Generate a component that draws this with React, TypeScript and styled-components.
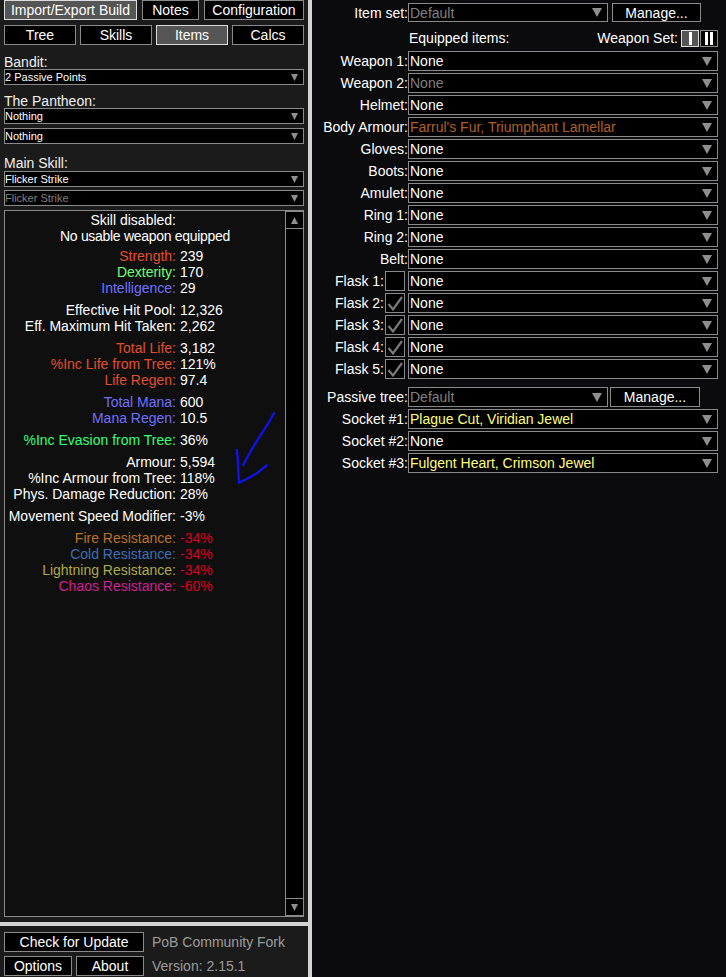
import React from 'react';
import styled, { createGlobalStyle } from 'styled-components';

const Global = createGlobalStyle`
  html, body { margin: 0; padding: 0; background: #0b0b0d; }
  body { font-family: "Liberation Sans", Arial, sans-serif; color: #fff; }
  * { box-sizing: border-box; }
`;

const C = {
  normal: '#ffffff',
  disabled: '#808080',
  border: '#8a8a8a',
  str: '#e05030',
  dex: '#70ff70',
  int: '#7070ff',
  life: '#e05030',
  mana: '#7070ff',
  evasion: '#33ff77',
  fire: '#b97123',
  cold: '#3f6db3',
  lightning: '#adaa47',
  chaos: '#d02090',
  negative: '#dd0022',
  unique: '#af6025',
  rare: '#ffff77',
};

const Page = styled.div`
  display: flex;
  width: 726px;
  height: 977px;
  overflow: hidden;
  background: #0b0b0d;
  font-size: 14px;
`;

const LeftPanel = styled.div`
  width: 308px;
  flex: none;
  display: flex;
  flex-direction: column;
  background: #1b1b1b;
`;

const VDivider = styled.div`
  width: 4px;
  flex: none;
  background: #d4d4d4;
`;

const HDivider = styled.div`
  height: 4px;
  flex: none;
  background: #d4d4d4;
`;

const LeftTop = styled.div`
  flex: 1;
  min-height: 0;
  display: flex;
  flex-direction: column;
  padding: 0 4px 5px 4px;
`;

const ButtonRow = styled.div<{ $gap: number; $top: number }>`
  display: flex;
  gap: ${p => p.$gap}px;
  margin-top: ${p => p.$top}px;
`;

const Button = styled.div<{ $w: number; $h?: number; $active?: boolean; $left?: number }>`
  width: ${p => p.$w}px;
  height: ${p => p.$h ?? 20}px;
  margin-left: ${p => p.$left ?? 0}px;
  flex: none;
  display: flex;
  align-items: center;
  justify-content: center;
  background: ${p => (p.$active ? '#555555' : '#000')};
  border: 1px solid ${p => (p.$active ? '#dcdcdc' : C.border)};
  color: #fff;
  font-size: 14px;
  white-space: nowrap;
`;

const FieldLabel = styled.div<{ $top: number }>`
  margin-top: ${p => p.$top}px;
  line-height: 14px;
  height: 14px;
  font-size: 14px;
  color: #f0f0f0;
`;

const SelectBox = styled.div<{ $w?: number; $h: number; $size: number; $tone?: string; $top?: number }>`
  width: ${p => (p.$w ? `${p.$w}px` : '100%')};
  height: ${p => p.$h}px;
  margin-top: ${p => p.$top ?? 0}px;
  flex: none;
  display: flex;
  align-items: center;
  background: #000;
  border: 1px solid ${C.border};
  padding: 0 5px 0 ${p => (p.$size > 12 ? 1 : 0)}px;
  font-size: ${p => p.$size}px;
  color: ${p => p.$tone ?? C.normal};
  white-space: nowrap;
  overflow: hidden;
`;

const SelectText = styled.span`
  flex: 1;
  overflow: hidden;
`;

const ArrowSvg = styled.svg`
  flex: none;
  display: block;
`;

function Arrow({ big, up }: { big?: boolean; up?: boolean }) {
  const w = big ? 10 : 7;
  const h = big ? 9 : 7;
  return (
    <ArrowSvg width={w} height={h} viewBox={`0 0 ${w} ${h}`}>
      <polygon
        points={up ? `0,${h} ${w},${h} ${w / 2},0` : `0,0 ${w},0 ${w / 2},${h}`}
        fill="#8e8e8e"
      />
    </ArrowSvg>
  );
}

function Select({
  text,
  tone,
  w,
  big,
  top,
}: {
  text: string;
  tone?: string;
  w?: number;
  big?: boolean;
  top?: number;
}) {
  return (
    <SelectBox $w={w} $h={big ? 20 : 16} $size={big ? 14 : 11} $tone={tone} $top={top}>
      <SelectText>{text}</SelectText>
      <Arrow big={big} />
    </SelectBox>
  );
}

/* ---------- stats box ---------- */

const StatsBox = styled.div`
  position: relative;
  flex: 1;
  min-height: 0;
  margin-top: 4px;
  display: flex;
  background: #0f0f0f;
  border: 1px solid ${C.border};
`;

const StatsContent = styled.div`
  flex: 1;
  padding-top: 1px;
  font-size: 14px;
`;

const Scrollbar = styled.div`
  width: 18px;
  flex: none;
  display: flex;
  flex-direction: column;
  justify-content: space-between;
  background: #000;
  border-left: 1px solid ${C.border};
`;

const ScrollArrowBox = styled.div`
  height: 18px;
  display: flex;
  align-items: center;
  justify-content: center;
  border: 1px solid ${C.border};
  border-left: none;
  margin-right: -1px;
`;

const StatGroup = styled.div<{ $top: number }>`
  margin-top: ${p => p.$top}px;
`;

const StatLine = styled.div`
  display: grid;
  grid-template-columns: 171px 1fr;
  column-gap: 4px;
  height: 16px;
  line-height: 16px;
  white-space: nowrap;
`;

const StatLabel = styled.span<{ $c?: string }>`
  text-align: right;
  color: ${p => p.$c ?? C.normal};
`;

const StatValue = styled.span<{ $c?: string }>`
  color: ${p => p.$c ?? C.normal};
`;

const CenterLine = styled.div`
  height: 16px;
  line-height: 16px;
  text-align: center;
  white-space: nowrap;
  letter-spacing: -0.3px;
`;

const Scribble = styled.svg`
  position: absolute;
  left: 225px;
  top: 197px;
  pointer-events: none;
`;

type Stat = [string, string, string?, string?];

const groups: { top: number; rows: Stat[] }[] = [
  {
    top: 4,
    rows: [
      ['Strength:', '239', C.str],
      ['Dexterity:', '170', C.dex],
      ['Intelligence:', '29', C.int],
    ],
  },
  {
    top: 6,
    rows: [
      ['Effective Hit Pool:', '12,326'],
      ['Eff. Maximum Hit Taken:', '2,262'],
    ],
  },
  {
    top: 6,
    rows: [
      ['Total Life:', '3,182', C.life],
      ['%Inc Life from Tree:', '121%', C.life],
      ['Life Regen:', '97.4', C.life],
    ],
  },
  {
    top: 6,
    rows: [
      ['Total Mana:', '600', C.mana],
      ['Mana Regen:', '10.5', C.mana],
    ],
  },
  { top: 6, rows: [['%Inc Evasion from Tree:', '36%', C.evasion]] },
  {
    top: 6,
    rows: [
      ['Armour:', '5,594'],
      ['%Inc Armour from Tree:', '118%'],
      ['Phys. Damage Reduction:', '28%'],
    ],
  },
  { top: 6, rows: [['Movement Speed Modifier:', '-3%']] },
  {
    top: 6,
    rows: [
      ['Fire Resistance:', '-34%', C.fire, C.negative],
      ['Cold Resistance:', '-34%', C.cold, C.negative],
      ['Lightning Resistance:', '-34%', C.lightning, C.negative],
      ['Chaos Resistance:', '-60%', C.chaos, C.negative],
    ],
  },
];

/* ---------- left bottom ---------- */

const LeftBottom = styled.div`
  height: 51px;
  flex: none;
  padding: 6px 4px 0 4px;
  display: grid;
  grid-template-columns: 140px 1fr;
  grid-template-rows: 20px 20px;
  row-gap: 4px;
  column-gap: 8px;
`;

const ButtonPair = styled.div`
  display: flex;
  gap: 4px;
`;

const InfoText = styled.div`
  line-height: 20px;
  font-size: 14px;
  color: #9c9c9c;
  white-space: nowrap;
`;

/* ---------- right panel ---------- */

const RightPanel = styled.div`
  flex: 1;
  display: flex;
  flex-direction: column;
  padding: 3px 8px 0 0;
  background: #0b0b0d;
`;

const FieldRow = styled.div<{ $top: number; $h?: number }>`
  display: flex;
  align-items: center;
  height: ${p => p.$h ?? 20}px;
  margin-top: ${p => p.$top}px;
`;

const RowLabel = styled.div`
  width: 96px;
  flex: none;
  display: flex;
  align-items: center;
  justify-content: flex-end;
  white-space: nowrap;
  color: #fff;
`;

const LabelText = styled.span<{ $pad?: number }>`
  margin-right: ${p => p.$pad ?? 0}px;
`;

const CheckBox = styled.div`
  width: 20px;
  height: 20px;
  margin-right: 3px;
  flex: none;
  background: #000;
  border: 1px solid ${C.border};
  display: flex;
  align-items: center;
  justify-content: center;
`;

const EquipRow = styled.div`
  display: flex;
  align-items: flex-start;
  height: 17px;
  margin-top: 8px;
  padding-left: 97px;
`;

const EquipText = styled.span`
  line-height: 14px;
  margin-top: 1px;
  white-space: nowrap;
`;

const Spacer = styled.div`
  flex: 1;
`;

const WeaponSetLabel = styled.span`
  line-height: 14px;
  margin-top: 1px;
  margin-right: 3px;
  white-space: nowrap;
`;

const SetButton = styled.div<{ $active?: boolean }>`
  width: 18px;
  height: 17px;
  margin-left: ${p => (p.$active ? 0 : 1)}px;
  display: flex;
  align-items: center;
  justify-content: center;
  gap: 2px;
  background: ${p => (p.$active ? '#555555' : '#000')};
  border: 1px solid ${p => (p.$active ? '#dcdcdc' : C.border)};
`;

const SetBar = styled.span`
  width: 3px;
  height: 13px;
  background: #fff;
`;

function Check() {
  return (
    <svg width="18" height="18" viewBox="0 0 18 18">
      <polyline points="2.5,10 7,15.5 16,3" fill="none" stroke="#7a7a7a" strokeWidth="2.2" />
    </svg>
  );
}

const slots: [string, string, string?][] = [
  ['Weapon 1:', 'None'],
  ['Weapon 2:', 'None', C.disabled],
  ['Helmet:', 'None'],
  ['Body Armour:', "Farrul's Fur, Triumphant Lamellar", C.unique],
  ['Gloves:', 'None'],
  ['Boots:', 'None'],
  ['Amulet:', 'None'],
  ['Ring 1:', 'None'],
  ['Ring 2:', 'None'],
  ['Belt:', 'None'],
];

const flasks: [string, boolean][] = [
  ['Flask 1:', false],
  ['Flask 2:', true],
  ['Flask 3:', true],
  ['Flask 4:', true],
  ['Flask 5:', true],
];

const sockets: [string, string, string?][] = [
  ['Socket #1:', 'Plague Cut, Viridian Jewel', C.rare],
  ['Socket #2:', 'None'],
  ['Socket #3:', 'Fulgent Heart, Crimson Jewel', C.rare],
];

export default function App() {
  return (
    <>
      <Global />
      <Page>
        <LeftPanel>
          <LeftTop>
            <ButtonRow $gap={5} $top={0}>
              <Button $w={133} $active>Import/Export Build</Button>
              <Button $w={57}>Notes</Button>
              <Button $w={100}>Configuration</Button>
            </ButtonRow>
            <ButtonRow $gap={4} $top={5}>
              <Button $w={72}>Tree</Button>
              <Button $w={72}>Skills</Button>
              <Button $w={72} $active>Items</Button>
              <Button $w={72}>Calcs</Button>
            </ButtonRow>

            <FieldLabel $top={10}>Bandit:</FieldLabel>
            <Select text="2 Passive Points" />

            <FieldLabel $top={9}>The Pantheon:</FieldLabel>
            <Select text="Nothing" />
            <Select text="Nothing" top={4} />

            <FieldLabel $top={12}>Main Skill:</FieldLabel>
            <Select text="Flicker Strike" top={1} />
            <Select text="Flicker Strike" tone={C.disabled} top={3} />

            <StatsBox>
              <StatsContent>
                <StatLine>
                  <StatLabel>Skill disabled:</StatLabel>
                  <StatValue />
                </StatLine>
                <CenterLine>No usable weapon equipped</CenterLine>
                {groups.map((g, gi) => (
                  <StatGroup key={gi} $top={g.top}>
                    {g.rows.map(([label, value, lc, vc]) => (
                      <StatLine key={label}>
                        <StatLabel $c={lc}>{label}</StatLabel>
                        <StatValue $c={vc}>{value}</StatValue>
                      </StatLine>
                    ))}
                  </StatGroup>
                ))}
              </StatsContent>
              <Scrollbar>
                <ScrollArrowBox>
                  <Arrow up />
                </ScrollArrowBox>
                <ScrollArrowBox>
                  <Arrow />
                </ScrollArrowBox>
              </Scrollbar>
              <Scribble width="50" height="80" viewBox="0 0 50 80">
                <polyline
                  points="44,5.3 38.3,15.3 31.7,25.3 23.3,38.7 16.7,50.3 13.3,57"
                  fill="none"
                  stroke="#1212ee"
                  strokeWidth="2.3"
                  strokeLinecap="round"
                  strokeLinejoin="round"
                />
                <polyline
                  points="6.7,42 7.7,50.3 9,74.7 16.7,71 26.7,65.3 36.7,57.3"
                  fill="none"
                  stroke="#1212ee"
                  strokeWidth="2.3"
                  strokeLinecap="round"
                  strokeLinejoin="round"
                />
              </Scribble>
            </StatsBox>
          </LeftTop>
          <HDivider />
          <LeftBottom>
            <Button $w={140}>Check for Update</Button>
            <InfoText>PoB Community Fork</InfoText>
            <ButtonPair>
              <Button $w={68}>Options</Button>
              <Button $w={68}>About</Button>
            </ButtonPair>
            <InfoText>Version: 2.15.1</InfoText>
          </LeftBottom>
        </LeftPanel>

        <VDivider />

        <RightPanel>
          <FieldRow $top={0} $h={19}>
            <RowLabel>Item set:</RowLabel>
            <SelectBox $w={200} $h={19} $size={14} $tone={C.disabled}>
              <SelectText>Default</SelectText>
              <Arrow big />
            </SelectBox>
            <Button $w={89} $h={19} $left={4}>Manage...</Button>
          </FieldRow>

          <EquipRow>
            <EquipText>Equipped items:</EquipText>
            <Spacer />
            <WeaponSetLabel>Weapon Set:</WeaponSetLabel>
            <SetButton $active>
              <SetBar />
            </SetButton>
            <SetButton>
              <SetBar />
              <SetBar />
            </SetButton>
          </EquipRow>

          {slots.map(([label, value, tone], i) => (
            <FieldRow key={label} $top={i === 0 ? 4 : 2}>
              <RowLabel>{label}</RowLabel>
              <Select text={value} tone={tone} w={310} big />
            </FieldRow>
          ))}

          {flasks.map(([label, checked]) => (
            <FieldRow key={label} $top={2}>
              <RowLabel>
                <LabelText $pad={1}>{label}</LabelText>
                <CheckBox>{checked ? <Check /> : null}</CheckBox>
              </RowLabel>
              <Select text="None" w={310} big />
            </FieldRow>
          ))}

          <FieldRow $top={8} $h={20}>
            <RowLabel>Passive tree:</RowLabel>
            <SelectBox $w={200} $h={20} $size={14} $tone={C.disabled}>
              <SelectText>Default</SelectText>
              <Arrow big />
            </SelectBox>
            <Button $w={90} $h={20} $left={2}>Manage...</Button>
          </FieldRow>

          {sockets.map(([label, value, tone]) => (
            <FieldRow key={label} $top={2}>
              <RowLabel>{label}</RowLabel>
              <Select text={value} tone={tone} w={310} big />
            </FieldRow>
          ))}
        </RightPanel>
      </Page>
    </>
  );
}
